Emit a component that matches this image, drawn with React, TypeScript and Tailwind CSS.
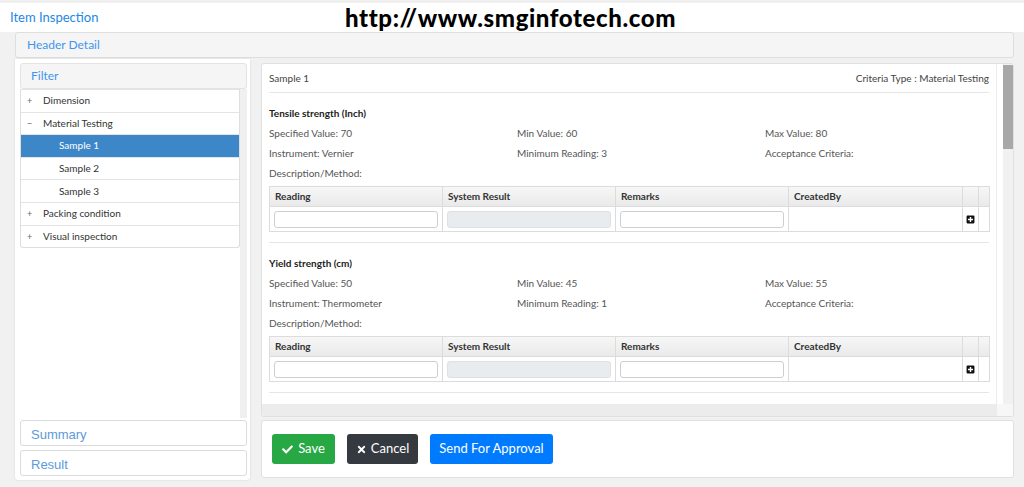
import React from "react";
import { FaCheck, FaTimes, FaPlusSquare } from "react-icons/fa";

const treeItems = [
  { sign: "+", label: "Dimension", level: 0 },
  { sign: "−", label: "Material Testing", level: 0 },
  { sign: "", label: "Sample 1", level: 1, active: true },
  { sign: "", label: "Sample 2", level: 1 },
  { sign: "", label: "Sample 3", level: 1 },
  { sign: "+", label: "Packing condition", level: 0 },
  { sign: "+", label: "Visual inspection", level: 0 },
];

type Sec = {
  title: string;
  spec: string;
  min: string;
  max: string;
  instrument: string;
  minRead: string;
};

const sections: Sec[] = [
  { title: "Tensile strength (Inch)", spec: "70", min: "60", max: "80", instrument: "Vernier", minRead: "3" },
  { title: "Yield strength (cm)", spec: "50", min: "45", max: "55", instrument: "Thermometer", minRead: "1" },
];

function Section({ s }: { s: Sec }) {
  return (
    <div className="pt-[10px] pb-[10px] border-b border-[#e6e6e6]">
      <div className="h-[20px] flex items-center font-bold text-[10px] text-[#222]">{s.title}</div>
      <div className="grid grid-cols-[248px_248px_248px] text-[10px] text-[#555] whitespace-nowrap">
        <div className="h-[20px] flex items-center">Specified Value: {s.spec}</div>
        <div className="h-[20px] flex items-center">Min Value: {s.min}</div>
        <div className="h-[20px] flex items-center">Max Value: {s.max}</div>
        <div className="h-[20px] flex items-center">Instrument: {s.instrument}</div>
        <div className="h-[20px] flex items-center">Minimum Reading: {s.minRead}</div>
        <div className="h-[20px] flex items-center">Acceptance Criteria:</div>
        <div className="h-[20px] flex items-center col-span-3">Description/Method:</div>
      </div>
      <table className="mt-[3px] w-[721px] border-collapse border border-[#dcdcdc] text-[10px]">
        <thead>
          <tr className="h-[20px] bg-gradient-to-b from-[#f7f7f7] to-[#e9e9e9] text-[#333]">
            <th className="w-[173px] border border-[#dcdcdc] text-left font-bold px-[5px]">Reading</th>
            <th className="w-[173px] border border-[#dcdcdc] text-left font-bold px-[5px]">System Result</th>
            <th className="w-[173px] border border-[#dcdcdc] text-left font-bold px-[5px]">Remarks</th>
            <th className="w-[174px] border border-[#dcdcdc] text-left font-bold px-[5px]">CreatedBy</th>
            <th className="w-[16px] border border-[#dcdcdc]"></th>
            <th className="border border-[#dcdcdc]"></th>
          </tr>
        </thead>
        <tbody>
          <tr className="h-[25px]">
            <td className="border border-[#dcdcdc] px-[4px]">
              <div className="h-[17px] rounded-[3px] border border-[#ccd0d4] bg-white"></div>
            </td>
            <td className="border border-[#dcdcdc] px-[4px]">
              <div className="h-[17px] rounded-[3px] border border-[#dde1e5] bg-[#e9ecef]"></div>
            </td>
            <td className="border border-[#dcdcdc] px-[4px]">
              <div className="h-[17px] rounded-[3px] border border-[#ccd0d4] bg-white"></div>
            </td>
            <td className="border border-[#dcdcdc]"></td>
            <td className="border border-[#dcdcdc] text-center">
              <FaPlusSquare className="inline-block text-[9px] text-[#111]" />
            </td>
            <td className="border border-[#dcdcdc]"></td>
          </tr>
        </tbody>
      </table>
    </div>
  );
}

export default function App() {
  return (
    <div className="w-[1024px] h-[487px] bg-[#f1f1f1] flex flex-col overflow-hidden font-['Lato',sans-serif]">
      {/* top bar */}
      <div className="h-[32px] shrink-0 bg-white border-t-[3px] border-[#f0f0f0] flex items-center">
        <div className="pl-[10px] w-[345px] text-[13px] text-[#1e88e5]">Item Inspection</div>
        <div className="font-['Lato',sans-serif] font-black text-[24px] text-black tracking-[0.6px] leading-none">
          http://www.smginfotech.com
        </div>
      </div>

      <div className="flex-1 flex flex-col pl-[15px] pr-[10px] pb-[7px]">
        {/* header detail */}
        <div className="h-[26px] shrink-0 bg-[#f5f5f5] border border-[#dedede] rounded-[3px] flex items-center pl-[11px] text-[12px] text-[#3f95ee]">
          Header Detail
        </div>

        <div className="flex-1 flex gap-[11px] mt-[1px] min-h-0">
          {/* left column */}
          <div className="w-[235px] bg-white shadow-[0_0_2px_rgba(0,0,0,0.15)] rounded-b-[3px] p-[4px] pl-[5px] pr-[3px] flex flex-col">
            <div className="h-[26px] bg-[#f5f5f5] border border-[#e3e3e3] rounded-[3px] flex items-center pl-[10px] text-[12px] text-[#3f95ee]">
              Filter
            </div>
            <div className="flex-1 flex min-h-0">
              <div className="w-[220px] self-start border border-t-0 border-[#dedede] rounded-b-[3px] text-[10px] text-[#333]">
                {treeItems.map((t, i) => (
                  <div
                    key={i}
                    className={
                      "h-[22.6px] flex items-center border-t border-[#e4e4e4] " +
                      (t.active ? "bg-[#3d87c8] text-white" : "")
                    }
                  >
                    <span className="w-[22px] pl-[6px] text-[#666] text-[9px]">{t.sign}</span>
                    <span className={t.level ? "pl-[16px]" : ""}>{t.label}</span>
                  </div>
                ))}
              </div>
              <div className="flex-1 bg-[#f0f0f0]"></div>
            </div>
            <div className="mt-[2px] h-[26px] border border-[#dcdcdc] rounded-[3px] flex items-center pl-[10px] pt-[3px] text-[13px] text-[#5b9bd9] font-['Liberation_Sans',sans-serif]">
              Summary
            </div>
            <div className="mt-[4px] h-[26px] border border-[#dcdcdc] rounded-[3px] flex items-center pl-[10px] pt-[3px] text-[13px] text-[#5b9bd9] font-['Liberation_Sans',sans-serif]">
              Result
            </div>
          </div>

          {/* right column */}
          <div className="flex-1 flex flex-col pt-[4px] min-w-0">
            <div className="h-[354px] shrink-0 bg-white border border-[#e0e0e0] rounded-[3px] flex flex-col overflow-hidden">
              <div className="flex-1 flex min-h-0">
                <div className="flex-1 px-[7px] border-r border-[#ececec] overflow-hidden">
                  <div className="h-[29px] flex items-center justify-between border-b border-[#e6e6e6] text-[10px] text-[#444]">
                    <span>Sample 1</span>
                    <span>Criteria Type : Material Testing</span>
                  </div>
                  {sections.map((s, i) => (
                    <Section key={i} s={s} />
                  ))}
                </div>
                <div className="w-[6px] bg-white"></div>
                <div className="w-[10px] bg-[#f1f1f1] pt-[1px]">
                  <div className="h-[84px] bg-[#a8a8a8]"></div>
                </div>
              </div>
              <div className="h-[12px] shrink-0 flex">
                <div className="flex-1 bg-[#ececec]"></div>
                <div className="w-[16px] bg-[#f7f7f7]"></div>
              </div>
            </div>

            <div className="mt-[3px] h-[58px] bg-white border border-[#e0e0e0] rounded-[3px] flex items-center gap-[12px] pl-[10px] text-[13px]">
              <button className="h-[30px] w-[63px] rounded-[3px] bg-[#28a745] text-white flex items-center justify-center gap-[5px]">
                <FaCheck className="text-[11px]" />
                <span>Save</span>
              </button>
              <button className="h-[30px] w-[71px] rounded-[3px] bg-[#343a40] text-white flex items-center justify-center gap-[4px]">
                <FaTimes className="text-[11px]" />
                <span>Cancel</span>
              </button>
              <button className="h-[30px] w-[123px] rounded-[3px] bg-[#007bff] text-white flex items-center justify-center">
                Send For Approval
              </button>
            </div>
          </div>
        </div>
      </div>
    </div>
  );
}
